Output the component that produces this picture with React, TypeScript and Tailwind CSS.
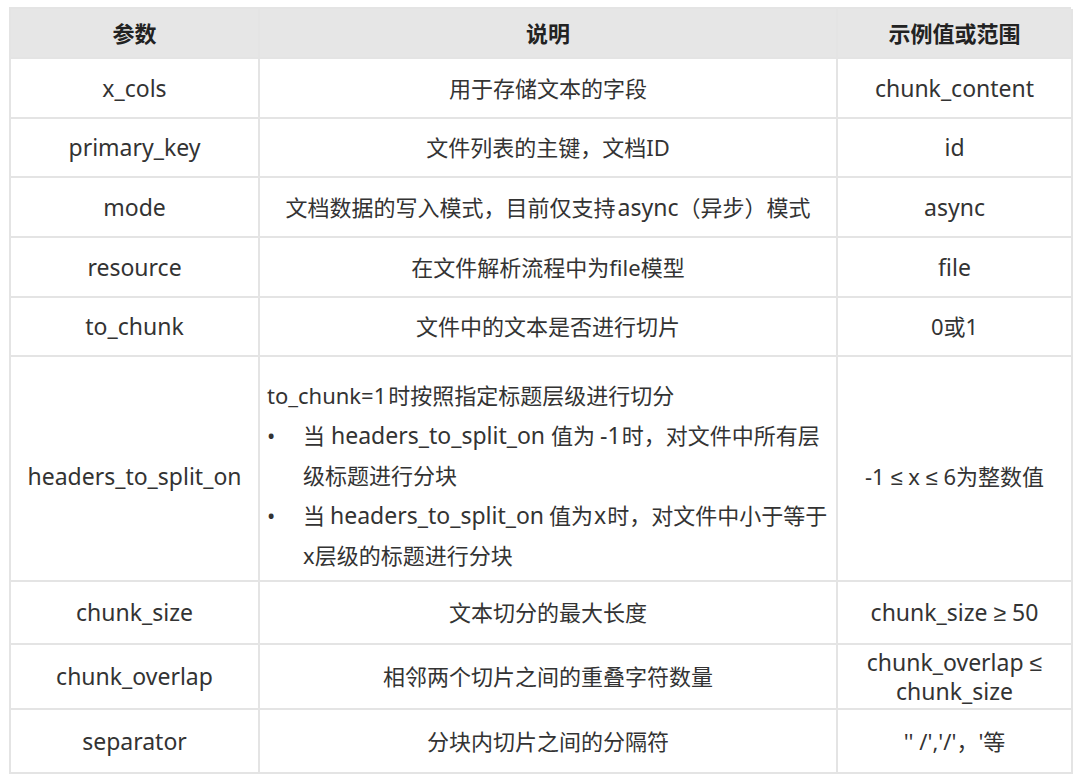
import React from "react";

const LE = () => <span style={{ fontFamily: '"Liberation Sans", sans-serif' }}>≤</span>;
const GE = () => <span style={{ fontFamily: '"Liberation Sans", sans-serif' }}>≥</span>;

type R = { p: string; d: React.ReactNode; e: React.ReactNode; h: string; eLatin?: boolean; eLead?: string };

const rows: R[] = [
  { p: "x_cols", d: "用于存储文本的字段", e: "chunk_content", h: "h-[60px]", eLatin: true },
  { p: "primary_key", d: "文件列表的主键，文档ID", e: "id", h: "h-[59px]", eLatin: true },
  {
    p: "mode",
    d: (
      <>
        文档数据的写入模式，目前仅支持<span className="ml-[2px] text-[23px]">async</span>（异步）模式
      </>
    ),
    e: "async",
    h: "h-[60px]",
    eLatin: true,
  },
  { p: "resource", d: "在文件解析流程中为file模型", e: "file", h: "h-[60px]", eLatin: true },
  { p: "to_chunk", d: "文件中的文本是否进行切片", e: "0或1", h: "h-[59px]" },
];

const rows2: R[] = [
  { p: "chunk_size", d: "文本切分的最大长度", e: <>chunk_size <GE /> 50</>, h: "h-[63px]", eLatin: true },
  {
    p: "chunk_overlap",
    d: "相邻两个切片之间的重叠字符数量",
    e: <>chunk_overlap <LE /> chunk_size</>,
    h: "h-[65px]",
    eLatin: true,
    eLead: "leading-[28px]",
  },
  { p: "separator", d: "分块内切片之间的分隔符", e: "'' /','/'，'等", h: "h-[64px]" },
];

const cell = "flex items-center justify-center text-center border-r-2 border-b-2 border-[#e4e4e4] px-3 leading-[27px]";

function Row({ p, d, e, h, eLatin, eLead }: R) {
  return (
    <>
      <div className={`${cell} ${h} text-[23px]`}>
        <span>{p}</span>
      </div>
      <div className={`${cell} ${h}`}>
        <span>{d}</span>
      </div>
      <div className={`${cell} ${h} ${eLatin ? "text-[23px]" : ""}`}>
        <span className={eLead ?? ""}>{e}</span>
      </div>
    </>
  );
}

export default function App() {
  return (
    <div
      className="w-[1080px] h-[783px] bg-white pl-[9px] pt-[7px] text-[22px] text-[#333333]"
      style={{ fontFamily: '"Noto Sans", "Noto Sans CJK SC", sans-serif' }}
    >
      <div className="grid grid-cols-[249px_578px_235px] w-[1062px] border-l-2 border-t-2 border-[#e4e4e4]">
        <div className={`${cell} h-[50px] bg-[#e6e6e6] font-bold text-[#222222]`}>参数</div>
        <div className={`${cell} h-[50px] bg-[#e6e6e6] font-bold text-[#222222]`}>说明</div>
        <div className={`${cell} h-[50px] bg-[#e6e6e6] font-bold text-[#222222]`}>示例值或范围</div>
        {rows.map((r) => (
          <Row key={r.p} {...r} />
        ))}
        <div className={`${cell} h-[225px] pt-[16px] text-[23px]`}>
          <span>headers_to_split_on</span>
        </div>
        <div className="flex flex-col justify-center h-[225px] border-r-2 border-b-2 border-[#e4e4e4] pl-[7px] pt-[13px] leading-[40px]">
          <div>
            to_chunk=1<span className="ml-[2px]">时按照指定标题层级进行切分</span>
          </div>
          <div className="flex">
            <span className="w-[36px] shrink-0">•</span>
            <span className="whitespace-nowrap">
              当<span className="mx-[6px] text-[23px]">headers_to_split_on</span>值为
              <span className="ml-[5px] mr-[1px] text-[23px]">-1</span>时，对文件中所有层
              <br />
              级标题进行分块
            </span>
          </div>
          <div className="flex">
            <span className="w-[36px] shrink-0">•</span>
            <span className="whitespace-nowrap">
              当<span className="mx-[5px] text-[23px]">headers_to_split_on</span>值为
              <span className="ml-[1px] mr-[1px] text-[23px]">x</span>时，对文件中小于等于
              <br />
              x层级的标题进行分块
            </span>
          </div>
        </div>
        <div className={`${cell} h-[225px] pt-[16px]`}>
          <span>
            -1 <LE /> x <LE /> 6为整数值
          </span>
        </div>
        {rows2.map((r) => (
          <Row key={r.p} {...r} />
        ))}
      </div>
    </div>
  );
}
